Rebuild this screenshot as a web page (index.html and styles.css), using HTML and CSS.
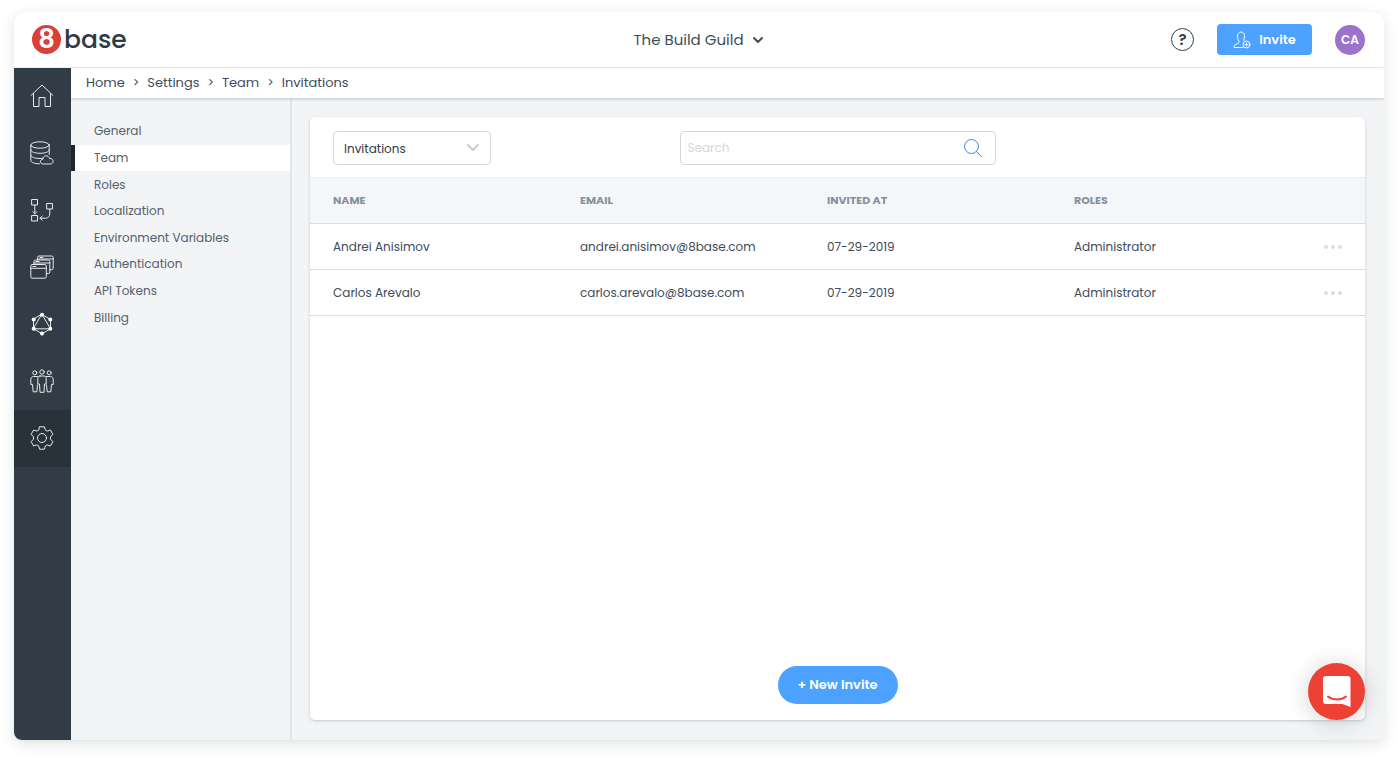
FILE: index.html
```html
<!DOCTYPE html>
<html lang="en">
<head>
  <meta charset="UTF-8" />
  <meta name="viewport" content="width=device-width, initial-scale=1" />
  <title>Invitations - 8base</title>
  <link rel="stylesheet" href="styles.css">
</head>
<body>
  <div class="app">
    <header class="header">
      <a class="logo" href="#"><span class="logo-mark">8</span><span class="logo-name">base</span></a>
      <button class="workspace" type="button">
        The Build Guild
        <svg width="12" height="8" viewBox="0 0 12 8"><path d="M2 2l4 4 4-4" /></svg>
      </button>
      <div class="header-actions">
        <button class="help" type="button" aria-label="Help">?</button>
        <button class="invite" type="button">
          <svg width="18" height="18" viewBox="0 0 18 18">
            <path d="M10 16.500H1c0-2.500 1-3 3.500-3.800C6 12.200 6.300 11.500 5.800 10.300C4.800 8.500 4.500 7 4.500 5C4.500 2.500 6 1 8 1s3.500 1.500 3.500 4c0 1.600-.2 2.900-.8 4.200" />
            <circle cx="13.500" cy="13.500" r="3.500" />
            <path d="M13.500 12v3M12 13.500h3" />
          </svg>
          Invite
        </button>
        <button class="avatar" type="button">CA</button>
      </div>
    </header>

    <div class="body">
      <nav class="sidebar" aria-label="Main">
        <a href="#" aria-label="Home">
          <svg class="icon" viewBox="0 0 24 24"><path d="M1 11.500L12 1l11 10.500M3.500 9.500v13h5.500v-9h6v9h5.500v-13" /></svg>
        </a>
        <a href="#" aria-label="Data">
          <svg class="icon" viewBox="0 0 24 24">
            <ellipse cx="10" cy="4" rx="9.200" ry="3.200" />
            <path d="M.8 4v15.500c0 1.900 4 3.300 8.700 3.300M19.200 4v9.500M.8 9c0 1.900 4 3.300 9.200 3.300s9.200-1.400 9.200-3.300M.8 14.200c0 1.900 4 3.300 9.200 3.300 1 0 2-.1 3-.2" />
            <path d="M13 23c-3.500 0-3.500-4.500-.2-4.700C13 14 18.500 13.500 19.500 17.500c4.500-.5 5 5.500 1 5.500z" />
          </svg>
        </a>
        <a href="#" aria-label="Workflows">
          <svg class="icon" viewBox="0 0 24 24">
            <path d="M2 1.500h5.500V7H2zM2 17.500h5.500V23H2zM17 5.500h5.500V11H17z" />
            <path d="M4.800 7v9M3 13.800l1.800 2 1.800-2M19.800 11v4c0 3.500-1.500 5.200-4.500 5.200H10M12.200 18.200l-2.200 2 2.200 2" />
          </svg>
        </a>
        <a href="#" aria-label="Apps">
          <svg class="icon" viewBox="0 0 24 24">
            <rect x=".8" y="9.500" width="15.500" height="13.700" rx="1.500" />
            <path d="M.8 13.300h15.500M2.800 11.500h3" />
            <path d="M4 9.500V6.500Q4 5 5.500 5h12.800q1.500 0 1.500 1.500V17q0 1.500-1.500 1.500h-2M4 8h15.800M6 6.500h3" />
            <path d="M7.500 5V2.500Q7.500 1 9 1h12.700q1.500 0 1.500 1.500v10.700q0 1.500-1.500 1.500h-2M7.500 4h15.700M10 2.500h3" />
          </svg>
        </a>
        <a href="#" aria-label="API Explorer">
          <svg class="icon" viewBox="0 0 24 24">
            <path d="M12 2.500l8.500 4.900v9.400L12 21.700l-8.500-4.900V7.400zM12 2.500l8.500 14.300h-17z" />
            <g class="icon-dots">
              <circle cx="12" cy="2.700" r="2" /><circle cx="20.300" cy="7.400" r="2" /><circle cx="20.300" cy="16.800" r="2" />
              <circle cx="12" cy="21.500" r="2" /><circle cx="3.700" cy="16.800" r="2" /><circle cx="3.700" cy="7.400" r="2" />
            </g>
          </svg>
        </a>
        <a href="#" aria-label="Users">
          <svg class="icon" viewBox="0 0 24 24">
            <circle cx="12" cy="3" r="2.200" /><circle cx="4.800" cy="3.800" r="2" /><circle cx="19.200" cy="3.800" r="2" />
            <path d="M10 7h4c1.500 0 2.200 1 2.200 2.500v5.500H14.500L14 23.300h-4L9.500 15H7.800V9.500C7.800 8 8.500 7 10 7z" />
            <path d="M7.500 7.500H3.500C1.500 7.500.8 9 .8 11v4.500h1.700l.7 7.300h3.600L7.500 16M16.500 7.500h4c2 0 2.700 1.500 2.700 3.500v4.500h-1.700l-.7 7.300h-3.600L16.500 16" />
          </svg>
        </a>
        <a class="active" href="#" aria-label="Settings">
          <svg class="icon" viewBox="0 0 24 24">
            <path d="M9.600.8h4.800l1 3.300 1.800 1 3.200-1.100 2.500 4.400-2.400 2.400v2.400l2.400 2.400-2.500 4.400-3.200-1.100-1.800 1-1 3.300H9.600l-1-3.300-1.800-1L3.600 20l-2.500-4.400 2.400-2.400v-2.400L1.100 8.400 3.600 4l3.200 1.100 1.800-1z" />
            <circle cx="12" cy="12" r="4.500" />
          </svg>
        </a>
      </nav>

      <div class="page">
        <nav class="breadcrumbs" aria-label="Breadcrumb">
          <a href="#">Home</a><span>&gt;</span>
          <a href="#">Settings</a><span>&gt;</span>
          <a href="#">Team</a><span>&gt;</span>
          <a href="#">Invitations</a>
        </nav>

        <div class="columns">
          <nav class="submenu" aria-label="Settings">
            <div class="submenu-list">
              <a href="#">General</a>
              <a class="active" href="#">Team</a>
              <a href="#">Roles</a>
              <a href="#">Localization</a>
              <a href="#">Environment Variables</a>
              <a href="#">Authentication</a>
              <a href="#">API Tokens</a>
              <a href="#">Billing</a>
            </div>
          </nav>

          <main class="main">
            <section class="card">
              <div class="toolbar">
                <div class="select">
                  <select aria-label="View">
                    <option>Invitations</option>
                    <option>Members</option>
                  </select>
                  <svg width="12" height="8" viewBox="0 0 12 8"><path d="M1 1l5 5 5-5" /></svg>
                </div>
                <label class="search">
                  <input type="search" placeholder="Search" aria-label="Search">
                  <svg width="20" height="20" viewBox="0 0 20 20"><circle cx="8.500" cy="8.500" r="7" /><path d="M13.500 13.500l5 5" /></svg>
                </label>
              </div>

              <table class="table">
                <thead>
                  <tr>
                    <th>NAME</th>
                    <th>EMAIL</th>
                    <th>INVITED AT</th>
                    <th>ROLES</th>
                    <th class="menu-col"></th>
                  </tr>
                </thead>
                <tbody>
                  <tr>
                    <td>Andrei Anisimov</td>
                    <td>andrei.anisimov@8base.com</td>
                    <td>07-29-2019</td>
                    <td>Administrator</td>
                    <td class="menu-col"><button class="dots" type="button" aria-label="Actions"><i></i><i></i><i></i></button></td>
                  </tr>
                  <tr>
                    <td>Carlos Arevalo</td>
                    <td>carlos.arevalo@8base.com</td>
                    <td>07-29-2019</td>
                    <td>Administrator</td>
                    <td class="menu-col"><button class="dots" type="button" aria-label="Actions"><i></i><i></i><i></i></button></td>
                  </tr>
                </tbody>
              </table>

              <div class="card-footer">
                <button class="new-invite" type="button">+ New Invite</button>
              </div>
            </section>
          </main>
        </div>
      </div>
    </div>
  </div>

  <button class="chat" type="button" aria-label="Open chat">
    <svg width="28" height="32" viewBox="0 0 28 32">
      <path class="chat-bubble" d="M3 0h21.500q3 0 3 3v28l-8-3H3q-3 0-3-3V3q0-3 3-3z" />
      <path class="chat-smile" d="M5 20.500c5 4 13 4 18 0" />
    </svg>
  </button>
</body>
</html>
```

FILE: styles.css
```css
* {
  box-sizing: border-box;
}
body {
  margin: 0;
  padding: 12px 16px 20px 14px;
  min-height: 100vh;
  display: flex;
  background: #fff;
  color: #414c59;
  font-family: Poppins, Inter, sans-serif;
  font-size: 12px;
}
a {
  color: inherit;
  text-decoration: none;
}
button, input, select {
  font: inherit;
  color: inherit;
}
button {
  border: 0;
  padding: 0;
  background: none;
  cursor: pointer;
}
svg {
  fill: none;
  stroke: currentColor;
  stroke-linecap: round;
  stroke-linejoin: round;
}
.app {
  flex: 1;
  display: flex;
  flex-direction: column;
  border-radius: 12px 12px 8px 8px;
  overflow: hidden;
  background: #f3f4f6;
  box-shadow: 0 4px 14px rgba(50, 65, 60, 0.15);
}

/* header */
.header {
  display: grid;
  grid-template-columns: 1fr auto 1fr;
  align-items: center;
  height: 56px;
  padding: 0 19px 0 18px;
  background: #fff;
  border-bottom: 1px solid #eef0f1;
}
.logo {
  display: flex;
  align-items: center;
  gap: 3px;
  color: #2f3a43;
}
.logo-mark {
  width: 29px;
  height: 29px;
  border-radius: 50%;
  background: #db4038;
  color: #fff;
  font-size: 26px;
  font-weight: 600;
  line-height: 29px;
  text-align: center;
}
.logo-name {
  font-size: 25px;
  font-weight: 500;
  line-height: 29px;
}
.workspace {
  display: flex;
  align-items: center;
  gap: 8px;
  font-size: 15px;
}
.workspace svg {
  stroke-width: 2;
}
.header-actions {
  display: flex;
  justify-content: flex-end;
  align-items: center;
  gap: 23px;
}
.help {
  width: 23px;
  height: 23px;
  border: 1px solid #323c47;
  border-radius: 50%;
  color: #323c47;
  font-size: 15px;
  font-weight: 600;
  line-height: 21px;
}
.invite {
  display: flex;
  justify-content: center;
  align-items: center;
  gap: 8px;
  width: 95px;
  height: 31px;
  border-radius: 4px;
  background: #4da1ff;
  color: #fff;
  font-size: 13px;
  font-weight: 600;
}
.avatar {
  width: 30px;
  height: 30px;
  border-radius: 50%;
  background: #9b73cd;
  color: #fff;
  font-size: 12px;
  font-weight: 600;
}

/* left icon bar */
.body {
  flex: 1;
  display: flex;
}
.sidebar {
  width: 57px;
  background: #323c47;
  color: #e6e9ec;
}
.sidebar a {
  display: flex;
  justify-content: center;
  align-items: center;
  height: 57px;
  padding: 0 1px 1px 0;
}
.sidebar .active {
  background: #29313b;
}
.icon {
  width: 24px;
  height: 24px;
}
.icon-dots {
  fill: #fff;
  stroke: none;
}
.page {
  flex: 1;
  display: flex;
  flex-direction: column;
}
.breadcrumbs {
  display: flex;
  align-items: center;
  gap: 8px;
  height: 30px;
  padding-left: 15px;
  background: #fff;
  box-shadow: 0 1px 3px rgba(50, 60, 70, 0.25);
  font-size: 13px;
  z-index: 1;
}
.breadcrumbs span {
  font-size: 12px;
}
.columns {
  flex: 1;
  display: flex;
}

/* settings menu */
.submenu {
  width: 221px;
  padding-top: 20px;
  border-right: 2px solid #e3e5e7;
  color: #56606b;
}
.submenu-list {
  display: grid;
  grid-auto-rows: 1fr;
  height: 213px;
}
.submenu a {
  display: flex;
  align-items: center;
  padding-left: 19px;
  border-left: 4px solid transparent;
}
.submenu .active {
  background: #fff;
  border-left-color: #1d262d;
}

/* content */
.main {
  flex: 1;
  display: flex;
  padding: 19px 19px 20px 18px;
}
.card {
  flex: 1;
  display: flex;
  flex-direction: column;
  border-radius: 5px;
  overflow: hidden;
  background: #fff;
  box-shadow: 0 1px 3px rgba(50, 70, 110, 0.25);
}
.toolbar {
  display: grid;
  grid-template-columns: 1fr 316px 1fr;
  padding: 14px 23px 12px;
  border-bottom: 1px solid #e9eef1;
}
.select {
  display: grid;
  align-items: center;
  width: 158px;
}
.select select, .select svg {
  grid-area: 1 / 1;
}
.select select, .search {
  width: 100%;
  height: 34px;
  border: 1px solid #d0d7dd;
  border-radius: 4px;
  background: #fff;
}
.select select {
  appearance: none;
  padding: 0 10px;
  color: #323c47;
}
.select svg {
  justify-self: end;
  margin-right: 12px;
  color: #c8ccd0;
  stroke-width: 2;
  pointer-events: none;
}
.search {
  display: flex;
  align-items: center;
  padding: 0 12px 0 7px;
}
.search input {
  flex: 1;
  min-width: 0;
  border: 0;
  padding: 0;
  outline: none;
  background: none;
}
.search input::placeholder {
  color: #d3d8dd;
}
.search svg {
  color: #3d86dc;
}
.table {
  width: 100%;
  table-layout: fixed;
  border-collapse: separate;
  border-spacing: 0;
}
.table th, .table td {
  height: 46px;
  padding: 0 0 0 23px;
  border-bottom: 1px solid #d8dfe4;
  text-align: left;
}
.table th {
  background: #f3f7fa;
  color: #87909a;
  font-size: 11px;
  font-weight: 700;
}
.table .menu-col {
  width: 67px;
  padding: 0 23px 0 0;
}
.dots {
  display: flex;
  gap: 3px;
  margin-left: auto;
}
.dots i {
  width: 4px;
  height: 4px;
  border-radius: 50%;
  background: #d8dde2;
}
.card-footer {
  margin-top: auto;
  padding-bottom: 16px;
  text-align: center;
}
.new-invite {
  width: 120px;
  height: 38px;
  border-radius: 19px;
  background: #4da1ff;
  color: #fff;
  font-size: 13px;
  font-weight: 600;
}

/* chat launcher */
.chat {
  position: fixed;
  right: 35px;
  bottom: 40px;
  display: flex;
  justify-content: center;
  align-items: center;
  width: 57px;
  height: 57px;
  border-radius: 50%;
  background: #ec4134;
  box-shadow: 0 2px 24px rgba(0, 0, 0, 0.18);
}
.chat-bubble {
  fill: #fff;
  stroke: none;
}
.chat-smile {
  stroke: #ec4134;
  stroke-width: 2;
}
```
